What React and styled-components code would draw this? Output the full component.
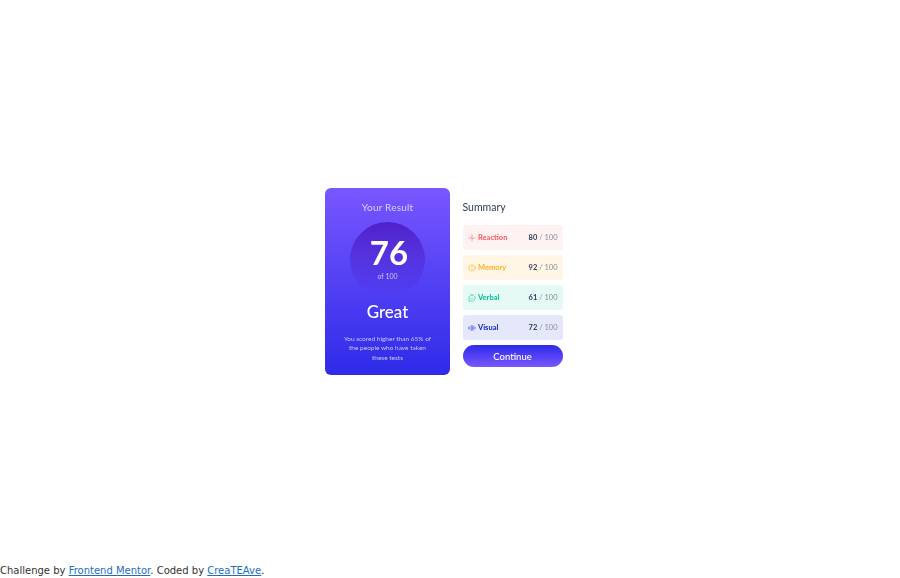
import React from "react";
import styled, { createGlobalStyle } from "styled-components";

const GlobalStyle = createGlobalStyle`
  * {
    box-sizing: border-box;
  }
  html, body {
    margin: 0;
    padding: 0;
    background: #fff;
  }
`;

const Page = styled.div`
  min-height: 578px;
  display: flex;
  flex-direction: column;
`;

const Main = styled.main`
  flex: 1;
  display: flex;
  justify-content: center;
  align-items: center;
  font-family: "Lato", "Open Sans", sans-serif;
`;

const Wrapper = styled.div`
  width: 250px;
  height: 187px;
  display: flex;
  filter: blur(0.3px);
`;

const ResultCard = styled.section`
  width: 125px;
  border-radius: 6px;
  padding-top: 13px;
  display: flex;
  flex-direction: column;
  align-items: center;
  color: #fff;
  background: linear-gradient(180deg, hsl(252, 100%, 67%), hsl(241, 81%, 54%));
`;

const ResultTitle = styled.h1`
  margin: 0;
  font-size: 10px;
  line-height: 12px;
  font-weight: 400;
  letter-spacing: 0.2px;
  color: #d6d1ff;
`;

const Circle = styled.div`
  width: 75px;
  height: 75px;
  margin-top: 9px;
  border-radius: 50%;
  display: flex;
  flex-direction: column;
  align-items: center;
  padding-top: 11px;
  background: linear-gradient(180deg, hsl(256, 72%, 46%), hsla(241, 72%, 46%, 0));
`;

const Score = styled.div`
  font-size: 33px;
  line-height: 38px;
  font-weight: 700;
  padding-left: 3px;
`;

const OutOf = styled.div`
  margin-top: 1px;
  font-size: 7px;
  line-height: 9px;
  color: #c9c4ff;
`;

const Grade = styled.h2`
  margin: 5px 0 0;
  font-size: 17px;
  line-height: 20px;
  font-weight: 500;
`;

const Blurb = styled.p`
  margin: 11.5px 0 0;
  width: 90px;
  font-size: 6.5px;
  line-height: 9.5px;
  text-align: center;
  color: #c9c4ff;
`;

const SummaryPanel = styled.section`
  width: 125px;
  padding: 13px 12.5px 0;
  display: flex;
  flex-direction: column;
`;

const SummaryTitle = styled.h2`
  margin: 0 0 12px;
  font-size: 10.5px;
  line-height: 12px;
  font-weight: 400;
  color: #303b5a;
`;

const Rows = styled.div`
  display: flex;
  flex-direction: column;
  gap: 5px;
`;

const Row = styled.div`
  height: 25px;
  padding: 0 5px;
  border-radius: 3px;
  display: flex;
  align-items: center;
  justify-content: space-between;
  font-size: 7.5px;
  font-weight: 700;
  color: ${(props) => props.$color};
  background: ${(props) => props.$bg};
`;

const RowLabel = styled.div`
  display: flex;
  align-items: center;
  gap: 2.5px;
`;

const RowIcon = styled.svg`
  width: 8px;
  height: 8px;
  fill: none;
  stroke: currentColor;
  stroke-width: 1.3;
  stroke-linecap: round;
  stroke-linejoin: round;
`;

const RowScore = styled.div`
  color: #303b5a;
`;

const RowTotal = styled.span`
  font-weight: 400;
  color: #8a8f9e;
`;

const ContinueButton = styled.button`
  margin-top: 5px;
  height: 22px;
  border: none;
  border-radius: 11px;
  font-family: inherit;
  font-size: 9.5px;
  font-weight: 500;
  color: #fff;
  background: linear-gradient(180deg, hsl(241, 81%, 54%), hsl(252, 100%, 67%));
`;

const Attribution = styled.footer`
  height: 15px;
  font-family: "DejaVu Sans", sans-serif;
  font-size: 10px;
  line-height: 15px;
  color: #333;

  a {
    color: #1c6dbf;
  }
`;

const ReactionIcon = () => (
  <RowIcon viewBox="0 0 20 20">
    <path d="M10 2v6M10 12v6M3 10h4.500l1.500-2 2 4 1.500-2H17" />
  </RowIcon>
);

const MemoryIcon = () => (
  <RowIcon viewBox="0 0 20 20">
    <circle cx="10" cy="10" r="8" />
    <path d="M10 5v10" />
  </RowIcon>
);

const VerbalIcon = () => (
  <RowIcon viewBox="0 0 20 20">
    <path d="M10 2a8 8 0 0 0-7 11.800L2 18l4.200-1A8 8 0 1 0 10 2Z" />
    <path d="M6.500 11c1.500 2 5.500 2 7 0" />
  </RowIcon>
);

const VisualIcon = () => (
  <RowIcon viewBox="0 0 20 20">
    <path d="M1.500 10S4.500 4.500 10 4.500 18.500 10 18.500 10 15.500 15.500 10 15.500 1.500 10 1.500 10Z" />
    <circle cx="10" cy="10" r="2.500" />
  </RowIcon>
);

const results = [
  { label: "Reaction", score: 80, color: "hsl(0, 100%, 67%)", bg: "hsl(0, 100%, 97.5%)", Icon: ReactionIcon },
  { label: "Memory", score: 92, color: "hsl(39, 100%, 56%)", bg: "hsl(39, 100%, 95%)", Icon: MemoryIcon },
  { label: "Verbal", score: 61, color: "hsl(166, 100%, 37%)", bg: "hsl(166, 70%, 94%)", Icon: VerbalIcon },
  { label: "Visual", score: 72, color: "hsl(234, 85%, 45%)", bg: "hsl(234, 70%, 94%)", Icon: VisualIcon },
];

const App = () => (
  <>
    <GlobalStyle />
    <Page>
      <Main>
        <Wrapper>
          <ResultCard>
            <ResultTitle>Your Result</ResultTitle>
            <Circle>
              <Score>76</Score>
              <OutOf>of 100</OutOf>
            </Circle>
            <Grade>Great</Grade>
            <Blurb>You scored higher than 65% of the people who have taken these tests</Blurb>
          </ResultCard>
          <SummaryPanel>
            <SummaryTitle>Summary</SummaryTitle>
            <Rows>
              {results.map(({ label, score, color, bg, Icon }) => (
                <Row key={label} $color={color} $bg={bg}>
                  <RowLabel>
                    <Icon />
                    {label}
                  </RowLabel>
                  <RowScore>
                    {score} <RowTotal>/ 100</RowTotal>
                  </RowScore>
                </Row>
              ))}
            </Rows>
            <ContinueButton>Continue</ContinueButton>
          </SummaryPanel>
        </Wrapper>
      </Main>
      <Attribution>
        Challenge by <a href="#fm">Frontend Mentor</a>. Coded by <a href="#ct">CreaTEAve</a>.
      </Attribution>
    </Page>
  </>
);

export default App;
